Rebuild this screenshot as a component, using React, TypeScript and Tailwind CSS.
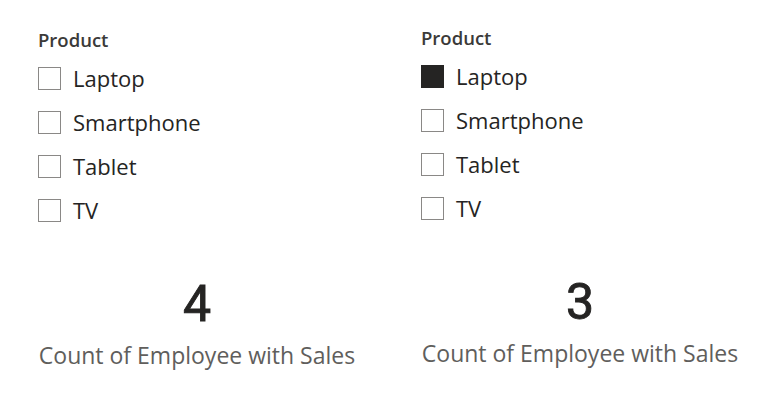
import React from "react";

type Slicer = {
  checked: string[];
  count: number;
};

const items = ["Laptop", "Smartphone", "Tablet", "TV"];

const panels: Slicer[] = [
  { checked: [], count: 4 },
  { checked: ["Laptop"], count: 3 },
];

function Panel({ checked, count, shift }: Slicer & { shift: boolean }) {
  return (
    <div className={`w-[383px] pl-[38px] ${shift ? "pt-[26px]" : "pt-[28px]"}`}>
      <div className="w-[318px]">
        <div className="text-[18.5px] leading-[24px] font-semibold text-[#3b3a39] font-['Open_Sans',sans-serif]">
          Product
        </div>
        <div className="mt-[4px] flex flex-col">
          {items.map((item) => {
            const on = checked.includes(item);
            return (
              <div key={item} className="flex h-[44px] items-center gap-[12px]">
                <span
                  className={`block h-[23px] w-[23px] shrink-0 border-[1.5px] ${
                    on ? "border-[#252423] bg-[#252423]" : "border-[#8a8886] bg-white"
                  }`}
                />
                <span className="text-[22px] leading-[30px] text-[#252423] font-['Open_Sans',sans-serif]">
                  {item}
                </span>
              </div>
            );
          })}
        </div>
        <div className="mt-[44px] flex flex-col items-center">
          <div className="text-[50px] leading-[56px] font-normal text-[#252423] font-['Roboto',sans-serif] [-webkit-text-stroke:0.9px_#252423]">
            {count}
          </div>
          <div className="mt-[8px] text-[23px] leading-[30px] text-[#605e5c] font-['Open_Sans',sans-serif]">
            Count of Employee with Sales
          </div>
        </div>
      </div>
    </div>
  );
}

export default function App() {
  return (
    <div className="flex h-[407px] w-[767px] bg-white">
      {panels.map((p, i) => (
        <Panel key={i} {...p} shift={i === 1} />
      ))}
    </div>
  );
}
